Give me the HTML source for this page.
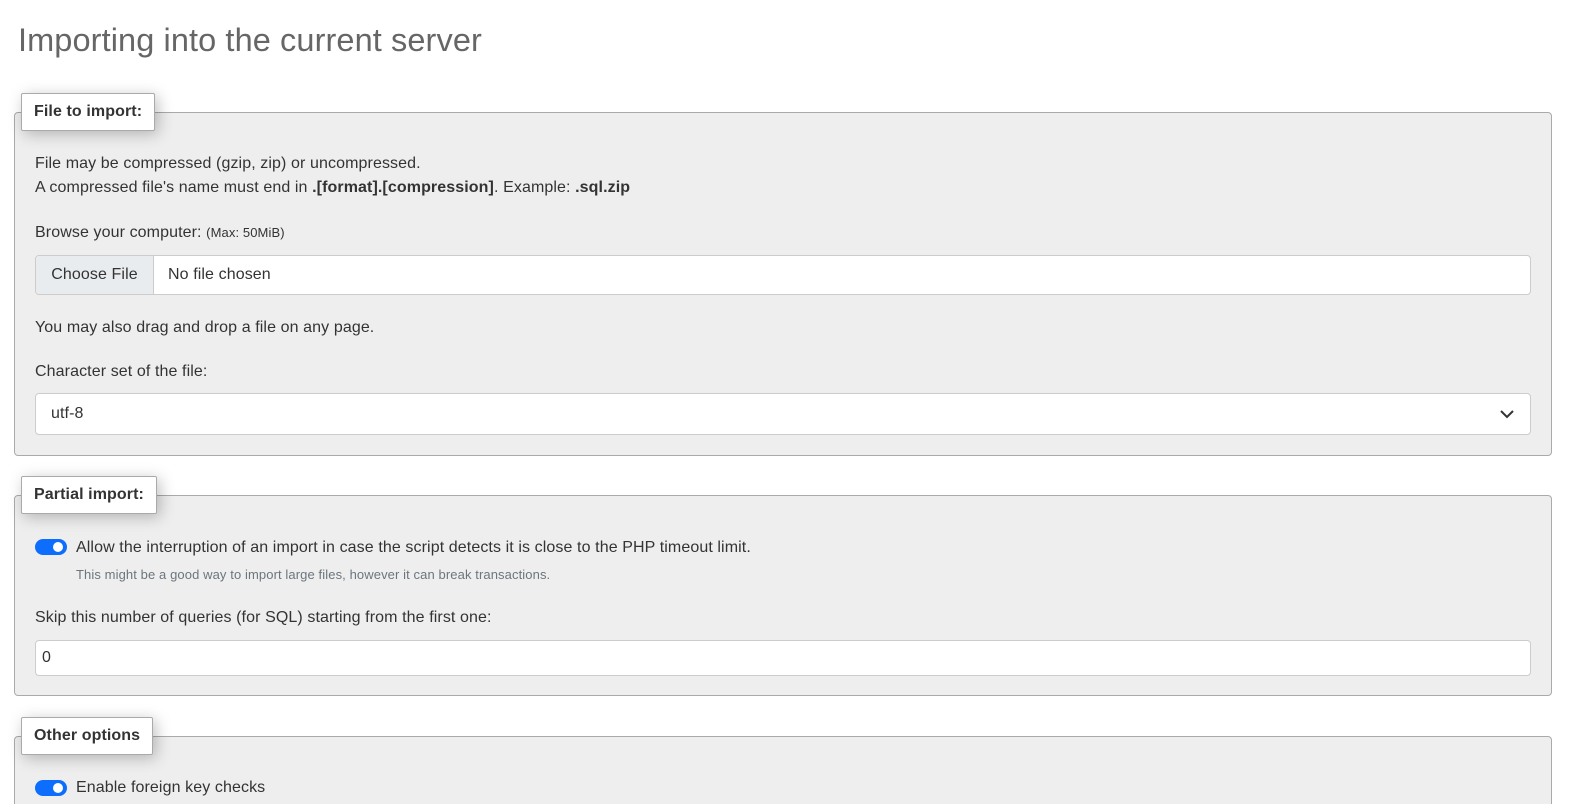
<!DOCTYPE html>
<html style="overflow:hidden;height:804px"><head><style>
body{margin:0;width:1583px;height:804px;overflow:hidden;background:#fff;font-family:"Liberation Sans",sans-serif;color:#333;font-size:16px;position:relative;letter-spacing:0.1px}
.a{position:absolute;white-space:nowrap}
h1{position:absolute;left:18px;top:20px;margin:0;font-weight:normal;font-size:32.5px;color:#666;line-height:40px}
.fs{position:absolute;left:14px;width:1536px;background:#eee;border:1px solid #aaa;border-radius:4px}
.lg{position:absolute;left:21px;background:#fff;border:1px solid #aaa;border-radius:2px;font-weight:bold;font-size:16px;line-height:36px;padding:0 12px;box-shadow:3px 3px 15px rgba(0,0,0,.25)}
.inp{position:absolute;left:35px;width:1494px;background:#fff;border:1px solid #ccc;border-radius:4px}
.tg{position:absolute;left:35px;width:32px;height:16px;border-radius:8px;background:#0d6efd}
.tg:after{content:"";position:absolute;right:4px;top:3px;width:10px;height:10px;border-radius:50%;background:#fff}
</style></head><body>
<h1>Importing into the current server</h1>

<div class="fs" style="top:112px;height:342px"></div>
<div class="lg" style="top:93px">File to import:</div>
<div class="a" style="left:35px;top:155px">File may be compressed (gzip, zip) or uncompressed.</div>
<div class="a" style="left:35px;top:179px">A compressed file's name must end in <b>.[format].[compression]</b>. Example: <b>.sql.zip</b></div>
<div class="a" style="left:35px;top:224px">Browse your computer: <span style="font-size:13px">(Max: 50MiB)</span></div>
<div class="inp" style="top:255px;height:38px;overflow:hidden">
 <div class="a" style="left:0;top:0;width:117px;height:38px;background:#e9ecef;border-right:1px solid #ccc;line-height:38px;text-align:center">Choose File</div>
 <div class="a" style="left:132px;top:0;line-height:38px">No file chosen</div>
</div>
<div class="a" style="left:35px;top:319px">You may also drag and drop a file on any page.</div>
<div class="a" style="left:35px;top:363px">Character set of the file:</div>
<div class="inp" style="top:393px;height:40px">
 <div class="a" style="left:15px;top:0;line-height:40px">utf-8</div>
 <svg class="a" style="right:16px;top:15px" width="14" height="10" viewBox="0 0 14 10"><path d="M1 2l6 6 6-6" fill="none" stroke="#333" stroke-width="2"/></svg>
</div>

<div class="fs" style="top:495px;height:199px"></div>
<div class="lg" style="top:476px">Partial import:</div>
<div class="tg" style="top:539px"></div>
<div class="a" style="left:76px;top:539px">Allow the interruption of an import in case the script detects it is close to the PHP timeout limit.</div>
<div class="a" style="left:76px;top:567px;font-size:13px;color:#6c757d">This might be a good way to import large files, however it can break transactions.</div>
<div class="a" style="left:35px;top:609px">Skip this number of queries (for SQL) starting from the first one:</div>
<div class="inp" style="top:640px;height:34px"><div class="a" style="left:6px;top:0;line-height:34px">0</div></div>

<div class="fs" style="top:736px;height:80px"></div>
<div class="lg" style="top:717px">Other options</div>
<div class="tg" style="top:780px"></div>
<div class="a" style="left:76px;top:779px">Enable foreign key checks</div>
</body></html>
